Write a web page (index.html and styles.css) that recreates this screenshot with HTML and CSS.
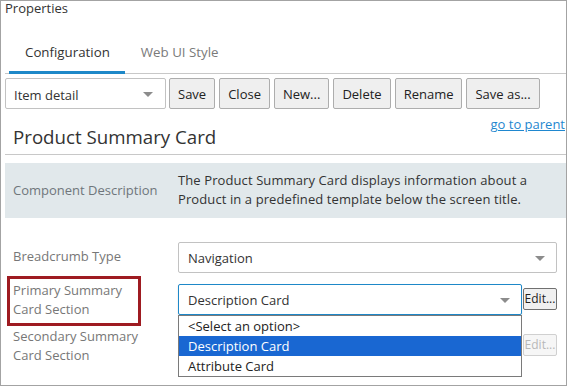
FILE: index.html
```html
<!DOCTYPE html>
<html lang="en">
<head>
<meta charset="utf-8">
<title>Properties</title>
<link rel="stylesheet" href="styles.css">
</head>
<body>
<div class="panel">
  <div class="panel-title">Properties</div>
  <div class="tabs">
    <div class="tab active">Configuration</div>
    <div class="tab">Web UI Style</div>
  </div>
  <div class="toolbar">
    <div class="select select-item"><span>Item detail</span><svg class="caret" width="10" height="5" viewBox="0 0 10 5"><path d="M0 0H10L5 5Z"/></svg></div>
    <button class="btn">Save</button>
    <button class="btn">Close</button>
    <button class="btn">New...</button>
    <button class="btn">Delete</button>
    <button class="btn">Rename</button>
    <button class="btn">Save as...</button>
  </div>
  <div class="title-row">
    <h1 class="title">Product Summary Card</h1>
    <a class="parent-link" href="#">go to parent</a>
  </div>
  <div class="desc">
    <div class="desc-label">Component Description</div>
    <div class="desc-text">The Product Summary Card displays information about a Product in a predefined template below the screen title.</div>
  </div>
  <div class="form">
    <div class="label">Breadcrumb Type</div>
    <div class="field">
      <div class="select"><span>Navigation</span><svg class="caret" width="10" height="5" viewBox="0 0 10 5"><path d="M0 0H10L5 5Z"/></svg></div>
    </div>
    <div class="label label-two">Primary Summary Card Section<span class="annot"></span></div>
    <div class="field">
      <div class="select focused"><span>Description Card</span><svg class="caret" width="10" height="5" viewBox="0 0 10 5"><path d="M0 0H10L5 5Z"/></svg></div>
      <button class="edit">Edit...</button>
      <ul class="dropdown">
        <li>&lt;Select an option&gt;</li>
        <li class="selected">Description Card</li>
        <li>Attribute Card</li>
      </ul>
    </div>
    <div class="label label-two">Secondary Summary Card Section</div>
    <div class="field">
      <div class="select"><span></span><svg class="caret" width="10" height="5" viewBox="0 0 10 5"><path d="M0 0H10L5 5Z"/></svg></div>
      <button class="edit" disabled>Edit...</button>
    </div>
  </div>
</div>
</body>
</html>
```
FILE: styles.css
```css
* { box-sizing: border-box; }

body {
  margin: 0;
  font-family: "Open Sans", "Noto Sans", sans-serif;
  font-size: 13px;
  color: #333;
  background: #fff;
}

.panel {
  width: 567px;
  height: 386px;
  border: 1px solid #a3a3a3;
  padding-left: 4px;
  overflow: hidden;
  position: relative;
}

.panel-title {
  line-height: 14px;
  color: #333;
}

.tabs {
  display: flex;
  border-bottom: 1px solid #c8c8c8;
  padding-left: 4px;
}

.tab {
  padding: 28px 16px 10px;
  line-height: 18px;
  font-size: 13.3px;
  border-bottom: 3px solid transparent;
  margin-bottom: -1px;
  color: #7a7a7a;
}

.tab.active {
  color: #333;
  border-bottom-color: #1e88c8;
  padding-right: 15px;
}

.toolbar {
  display: flex;
  align-items: center;
  gap: 4px;
  margin-top: 4px;
}

.select {
  display: flex;
  align-items: center;
  justify-content: space-between;
  height: 31px;
  border: 1px solid #c2c2c2;
  border-radius: 2px;
  padding: 2px 11px 0 9px;
  background: #fff;
  color: #333;
}

.select-item {
  width: 161px;
  margin-right: -1px;
  padding-left: 8px;
  padding-right: 12px;
}

.caret path { fill: #8c8c8c; }

.btn {
  height: 31px;
  padding: 0 8px;
  border: 1px solid #adadad;
  border-radius: 2px;
  background: #efefef;
  font: inherit;
  color: #222;
}

.title-row {
  display: flex;
  justify-content: space-between;
  align-items: flex-start;
  border-bottom: 1px solid #c8c8c8;
  padding: 16px 1px 5px 8px;
}

.title {
  margin: 0;
  font-size: 18.7px;
  font-weight: normal;
  line-height: 24px;
  color: #333;
}

.parent-link {
  margin-top: -10px;
  line-height: 18px;
  color: #1f87cf;
  text-decoration: underline;
}

.desc {
  display: flex;
  align-items: center;
  margin-top: 8px;
  background: #e1e8eb;
  padding: 8px 0 9px 8px;
  line-height: 19px;
}

.desc-label {
  width: 165px;
  flex: none;
  color: #6f767b;
}

.desc-text {
  width: 380px;
  color: #333;
  letter-spacing: 0.1px;
}

.form {
  display: grid;
  grid-template-columns: 173px 379px;
  row-gap: 11px;
  margin-top: 24px;
  line-height: 19px;
}

.label {
  position: relative;
  padding-left: 8px;
  padding-top: 5px;
  color: #777;
}

.label-two {
  padding-top: 0;
  padding-right: 35px;
  margin-top: -3px;
}

.annot {
  position: absolute;
  left: 2px;
  top: -5px;
  width: 134px;
  height: 50px;
  border: 3px solid #9e1b21;
}

.field {
  display: flex;
  align-items: flex-start;
  position: relative;
}

.field .select { flex: 1; }

.select.focused {
  border-color: #1e88c8;
  box-shadow: 0 1px 2px rgba(0, 0, 0, 0.12);
}

.edit {
  flex: none;
  width: 34px;
  height: 22px;
  margin: 4px 0 0 1px;
  padding: 0;
  border: 1px solid #707070;
  border-radius: 2px;
  background: #f0f0f0;
  font: inherit;
  font-size: 12px;
  line-height: 18px;
  color: #222;
  white-space: nowrap;
  overflow: hidden;
}

.edit:disabled {
  border-color: #d0d0d0;
  background: #f6f6f6;
  color: #b8b8b8;
}

.dropdown {
  position: absolute;
  left: 0;
  top: 31px;
  z-index: 2;
  width: 344px;
  margin: 0;
  padding: 0;
  list-style: none;
  border: 1px solid #7a7a7a;
  background: #fff;
}

.dropdown li {
  height: 20px;
  line-height: 20px;
  padding-left: 9px;
  color: #222;
}

.dropdown li.selected {
  background: #1967d2;
  color: #fff;
}
```
